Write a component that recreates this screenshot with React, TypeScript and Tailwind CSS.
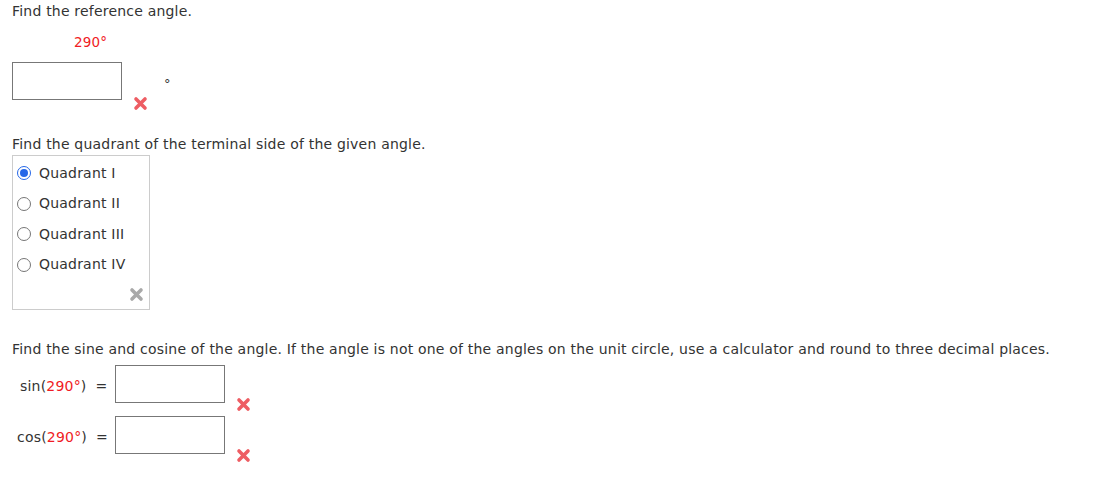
function Cross({ color = '#ee5d63' }: { color?: string }) {
  return (
    <svg width="15" height="15" viewBox="0 0 15 15" className="block">
      <path d="M3 3 L12 12 M12 3 L3 12" stroke={color} strokeWidth="3.6" strokeLinecap="round" />
    </svg>
  );
}

function Radio({ checked }: { checked?: boolean }) {
  return (
    <span
      className={`inline-flex h-[14px] w-[14px] shrink-0 items-center justify-center rounded-full border ${
        checked ? 'border-[#2567e8]' : 'border-[#767676]'
      } bg-white`}
    >
      {checked && <span className="h-[8px] w-[8px] rounded-full bg-[#2567e8]" />}
    </span>
  );
}

const quadrants = ['Quadrant I', 'Quadrant II', 'Quadrant III', 'Quadrant IV'];

export default function App() {
  return (
    <div className="h-[480px] w-[1110px] bg-white text-[14px] tracking-[0.2px] text-[#333] [font-family:'DejaVu_Sans',Verdana,sans-serif]">
      <div className="pl-3 pt-[2px]">
        <div className="leading-[18px]">Find the reference angle.</div>
        <div className="mt-[13px] pl-[62px] text-[13.5px] leading-[18px] text-[#f01c24]">290°</div>

        <div className="mt-[11px] flex items-start">
          <div className="h-[38px] w-[110px] border border-[#777]" />
          <div className="-mb-[11px] ml-[11px] mt-[34px]">
            <Cross />
          </div>
          <div className="ml-[16px] mt-[15px] text-[13px] leading-none">°</div>
        </div>

        <div className="mt-[35px] leading-[18px]">Find the quadrant of the terminal side of the given angle.</div>

        <div className="mt-[2px] flex h-[155px] w-[138px] flex-col border border-[#ccc] pl-[4px] pt-[2px]">
          {quadrants.map((q, i) => (
            <div key={q} className="flex h-[30.5px] items-center gap-[8px]">
              <Radio checked={i === 0} />
              <span>{q}</span>
            </div>
          ))}
          <div className="mt-[7px] flex justify-end pr-[5px]">
            <Cross color="#a9a9a9" />
          </div>
        </div>

        <div className="mt-[30px] leading-[18px]">
          Find the sine and cosine of the angle. If the angle is not one of the angles on the unit circle, use a calculator and round to three decimal places.
        </div>

        <div className="mt-[7px] flex items-start">
          <div className="flex h-[38px] w-[103px] items-center pl-[8px] pt-[4px]">
            sin(<span className="text-[#f01c24]">290°</span>)<span className="ml-[9px]">=</span>
          </div>
          <div className="h-[38px] w-[110px] border border-[#777]" />
          <div className="-mb-[9px] ml-[11px] mt-[32px]">
            <Cross />
          </div>
        </div>

        <div className="mt-[13px] flex items-start">
          <div className="flex h-[38px] w-[103px] items-center pl-[5px] pt-[4px]">
            cos(<span className="text-[#f01c24]">290°</span>)<span className="ml-[9px]">=</span>
          </div>
          <div className="h-[38px] w-[110px] border border-[#777]" />
          <div className="-mb-[9px] ml-[11px] mt-[32px]">
            <Cross />
          </div>
        </div>
      </div>
    </div>
  );
}
